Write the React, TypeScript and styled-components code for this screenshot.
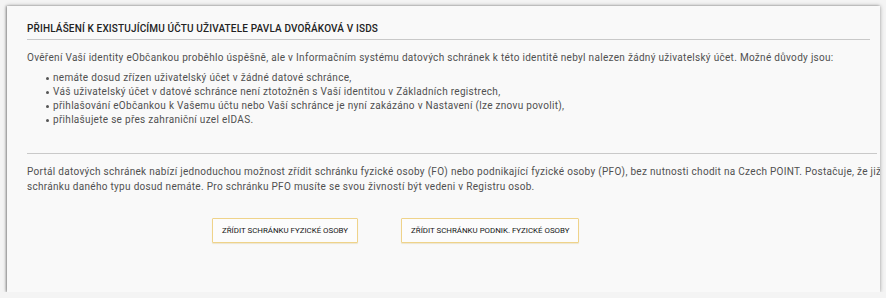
import React from "react";
import styled, { createGlobalStyle } from "styled-components";

const Global = createGlobalStyle`
  html, body { margin: 0; padding: 0; background: #f4f4f4; }
  body { font-family: Roboto, "Noto Sans", Arial, sans-serif; }
`;

const Card = styled.section`
  box-sizing: border-box;
  margin: 6px 0 0 7px;
  width: 873px;
  height: 286px;
  background: #f9f9f9;
  box-shadow: 0 0 4px rgba(0, 0, 0, 0.35), -1px 0 2px rgba(0, 0, 0, 0.3);
  padding: 17px 0 0 20px;
  overflow: hidden;
`;

const Title = styled.h2`
  margin: 0 10px 0 0;
  padding-bottom: 4px;
  border-bottom: 1px solid #c9c9c9;
  font-size: 10px;
  line-height: 12px;
  font-weight: 500;
  color: #222;
  letter-spacing: 0.15px;
`;

const Text = styled.p<{ $top: number }>`
  margin: ${(p) => p.$top}px 0 0;
  font-size: 10px;
  line-height: 14px;
  color: #505050;
  letter-spacing: 0.3px;
`;

const List = styled.ul`
  margin: 6px 0 0;
  padding: 0 0 0 26px;
  list-style: none;
`;

const Item = styled.li`
  position: relative;
  font-size: 10px;
  line-height: 14px;
  color: #505050;
  letter-spacing: 0.3px;
  &::before {
    content: "";
    position: absolute;
    left: -7px;
    top: 6px;
    width: 3px;
    height: 3px;
    border-radius: 50%;
    background: #555;
  }
`;

const Section = styled.div`
  margin-top: 26px;
  border-top: 1px solid #c9c9c9;
  margin-right: 3px;
`;

const Wide = styled(Text)`
  white-space: nowrap;
  line-height: 15px;
`;

const Buttons = styled.div`
  display: flex;
  gap: 43px;
  margin: 24px 0 0 185px;
`;

const Button = styled.button`
  box-sizing: border-box;
  height: 25px;
  padding: 0 9px;
  background: #fcfcfc;
  border: 1px solid #efd38a;
  border-radius: 1px;
  box-shadow: 0 1px 1px rgba(200, 170, 80, 0.25);
  font-family: Roboto, "Noto Sans", Arial, sans-serif;
  font-size: 7.9px;
  font-weight: 400;
  color: #151515;
  text-transform: uppercase;
  cursor: pointer;
`;

export default function App() {
  return (
    <>
      <Global />
      <Card>
        <Title>PŘIHLÁŠENÍ K EXISTUJÍCÍMU ÚČTU UŽIVATELE PAVLA DVOŘÁKOVÁ V ISDS</Title>
        <Text $top={11}>
          Ověření Vaší identity eObčankou proběhlo úspěšně, ale v Informačním systému datových schránek k této
          identitě nebyl nalezen žádný uživatelský účet. Možné důvody jsou:
        </Text>
        <List>
          <Item>nemáte dosud zřízen uživatelský účet v žádné datové schránce,</Item>
          <Item>Váš uživatelský účet v datové schránce není ztotožněn s Vaší identitou v Základních registrech,</Item>
          <Item>přihlašování eObčankou k Vašemu účtu nebo Vaší schránce je nyní zakázáno v Nastavení (lze znovu povolit),</Item>
          <Item>přihlašujete se přes zahraniční uzel eIDAS.</Item>
        </List>
        <Section>
          <Wide $top={10}>
            Portál datových schránek nabízí jednoduchou možnost zřídit schránku fyzické osoby (FO) nebo podnikající
            fyzické osoby (PFO), bez nutnosti chodit na Czech POINT. Postačuje, že již
            <br />
            schránku daného typu dosud nemáte. Pro schránku PFO musíte se svou živností být vedeni v Registru osob.
          </Wide>
          <Buttons>
            <Button>Zřídit schránku fyzické osoby</Button>
            <Button>Zřídit schránku podnik. fyzické osoby</Button>
          </Buttons>
        </Section>
      </Card>
    </>
  );
}
